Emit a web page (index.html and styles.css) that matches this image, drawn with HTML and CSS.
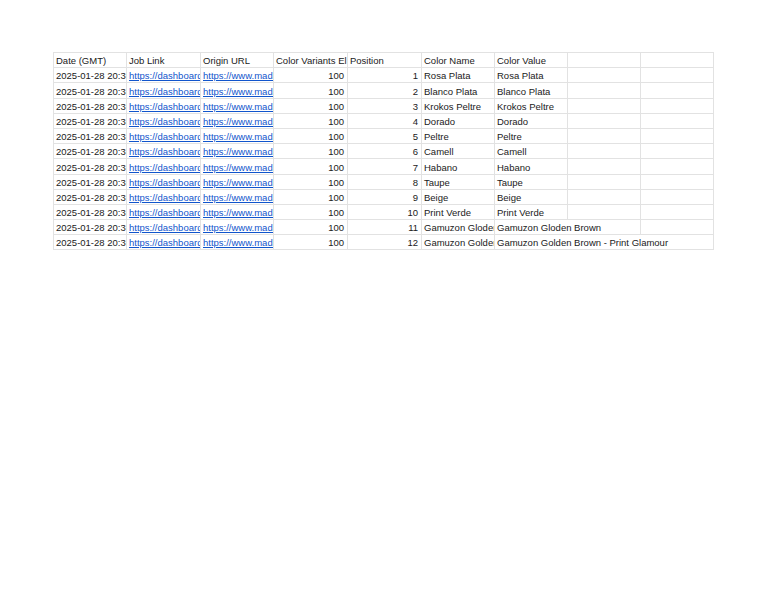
FILE: index.html
```html
<!DOCTYPE html>
<html>
<head>
<meta charset="utf-8">
<link rel="stylesheet" href="styles.css">
</head>
<body>
<div class="page">
<table class="sheet">
<colgroup>
<col class="c73"><col class="c74"><col class="c73"><col class="c74"><col class="c74"><col class="c73"><col class="c73"><col class="c73"><col class="c73">
</colgroup>
<tr><td>Date (GMT)</td><td>Job Link</td><td>Origin URL</td><td>Color Variants El</td><td>Position</td><td>Color Name</td><td>Color Value</td><td></td><td></td></tr>
<tr><td>2025-01-28 20:33:00</td><td class="link">https://dashboard</td><td class="link">https://www.madame</td><td class="num">100</td><td class="num">1</td><td>Rosa Plata</td><td>Rosa Plata</td><td></td><td></td></tr>
<tr><td>2025-01-28 20:33:00</td><td class="link">https://dashboard</td><td class="link">https://www.madame</td><td class="num">100</td><td class="num">2</td><td>Blanco Plata</td><td>Blanco Plata</td><td></td><td></td></tr>
<tr><td>2025-01-28 20:33:00</td><td class="link">https://dashboard</td><td class="link">https://www.madame</td><td class="num">100</td><td class="num">3</td><td>Krokos Peltre</td><td>Krokos Peltre</td><td></td><td></td></tr>
<tr><td>2025-01-28 20:33:00</td><td class="link">https://dashboard</td><td class="link">https://www.madame</td><td class="num">100</td><td class="num">4</td><td>Dorado</td><td>Dorado</td><td></td><td></td></tr>
<tr><td>2025-01-28 20:33:00</td><td class="link">https://dashboard</td><td class="link">https://www.madame</td><td class="num">100</td><td class="num">5</td><td>Peltre</td><td>Peltre</td><td></td><td></td></tr>
<tr><td>2025-01-28 20:33:00</td><td class="link">https://dashboard</td><td class="link">https://www.madame</td><td class="num">100</td><td class="num">6</td><td>Camell</td><td>Camell</td><td></td><td></td></tr>
<tr><td>2025-01-28 20:33:00</td><td class="link">https://dashboard</td><td class="link">https://www.madame</td><td class="num">100</td><td class="num">7</td><td>Habano</td><td>Habano</td><td></td><td></td></tr>
<tr><td>2025-01-28 20:33:00</td><td class="link">https://dashboard</td><td class="link">https://www.madame</td><td class="num">100</td><td class="num">8</td><td>Taupe</td><td>Taupe</td><td></td><td></td></tr>
<tr><td>2025-01-28 20:33:00</td><td class="link">https://dashboard</td><td class="link">https://www.madame</td><td class="num">100</td><td class="num">9</td><td>Beige</td><td>Beige</td><td></td><td></td></tr>
<tr><td>2025-01-28 20:33:00</td><td class="link">https://dashboard</td><td class="link">https://www.madame</td><td class="num">100</td><td class="num">10</td><td>Print Verde</td><td>Print Verde</td><td></td><td></td></tr>
<tr><td>2025-01-28 20:33:00</td><td class="link">https://dashboard</td><td class="link">https://www.madame</td><td class="num">100</td><td class="num">11</td><td>Gamuzon Gloden Brown</td><td colspan="2">Gamuzon Gloden Brown</td><td></td></tr>
<tr><td>2025-01-28 20:33:00</td><td class="link">https://dashboard</td><td class="link">https://www.madame</td><td class="num">100</td><td class="num">12</td><td>Gamuzon Golden Brown - Print Glamour</td><td colspan="3">Gamuzon Golden Brown - Print Glamour</td></tr>
</table>
</div>
</body>
</html>
```
FILE: styles.css
```css
html, body {
  margin: 0;
  padding: 0;
  background: #ffffff;
}
.page {
  padding: 52px 0 0 53px;
}
.sheet {
  border-collapse: collapse;
  table-layout: fixed;
  width: 661px;
  font-family: "Liberation Sans", Arial, sans-serif;
  font-size: 9.5px;
  color: #1a1a1a;
}
.c73 { width: 73px; }
.c74 { width: 74px; }
.sheet td {
  border: 1px solid #e2e2e2;
  height: 13.2px;
  padding: 0 2px 1px 2px;
  line-height: 11px;
  white-space: nowrap;
  overflow: hidden;
  vertical-align: bottom;
  text-overflow: clip;
}
.sheet td.num {
  text-align: right;
  padding-right: 3px;
}
.sheet td.link {
  color: #1155cc;
  text-decoration: underline;
}
```
